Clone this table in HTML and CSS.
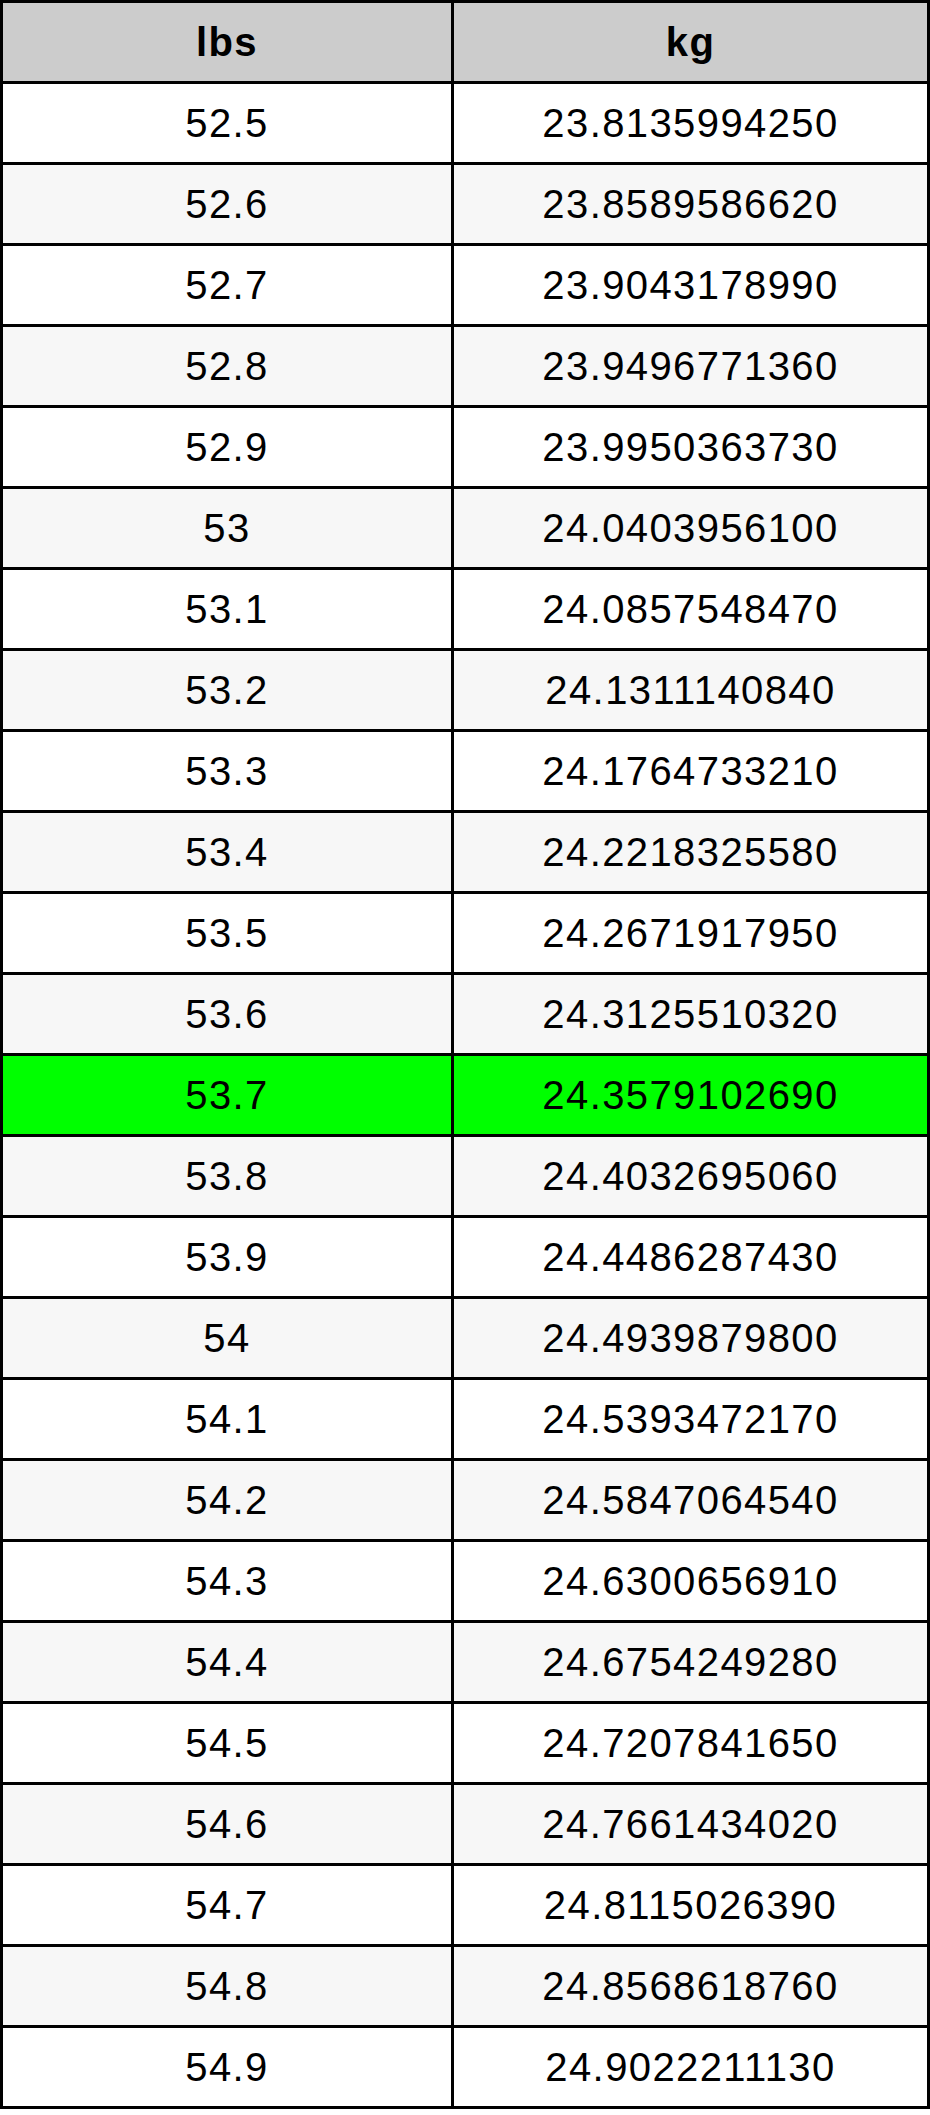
FILE: index.html
```html
<!DOCTYPE html>
<html lang="en">
<head>
<meta charset="utf-8">
<title>lbs to kg</title>
<link rel="stylesheet" href="styles.css">
</head>
<body>
<table class="conv">
<thead>
<tr><th class="c1">lbs</th><th class="c2">kg</th></tr>
</thead>
<tbody>
<tr><td>52.5</td><td>23.8135994250</td></tr>
<tr class="alt"><td>52.6</td><td>23.8589586620</td></tr>
<tr><td>52.7</td><td>23.9043178990</td></tr>
<tr class="alt"><td>52.8</td><td>23.9496771360</td></tr>
<tr><td>52.9</td><td>23.9950363730</td></tr>
<tr class="alt"><td>53</td><td>24.0403956100</td></tr>
<tr><td>53.1</td><td>24.0857548470</td></tr>
<tr class="alt"><td>53.2</td><td>24.1311140840</td></tr>
<tr><td>53.3</td><td>24.1764733210</td></tr>
<tr class="alt"><td>53.4</td><td>24.2218325580</td></tr>
<tr><td>53.5</td><td>24.2671917950</td></tr>
<tr class="alt"><td>53.6</td><td>24.3125510320</td></tr>
<tr class="hl"><td>53.7</td><td>24.3579102690</td></tr>
<tr class="alt"><td>53.8</td><td>24.4032695060</td></tr>
<tr><td>53.9</td><td>24.4486287430</td></tr>
<tr class="alt"><td>54</td><td>24.4939879800</td></tr>
<tr><td>54.1</td><td>24.5393472170</td></tr>
<tr class="alt"><td>54.2</td><td>24.5847064540</td></tr>
<tr><td>54.3</td><td>24.6300656910</td></tr>
<tr class="alt"><td>54.4</td><td>24.6754249280</td></tr>
<tr><td>54.5</td><td>24.7207841650</td></tr>
<tr class="alt"><td>54.6</td><td>24.7661434020</td></tr>
<tr><td>54.7</td><td>24.8115026390</td></tr>
<tr class="alt"><td>54.8</td><td>24.8568618760</td></tr>
<tr><td>54.9</td><td>24.9022211130</td></tr>
</tbody>
</table>
</body>
</html>
```

FILE: styles.css
```css
html, body {
  margin: 0;
  padding: 0;
  background: #ffffff;
}

.conv {
  width: 930px;
  table-layout: fixed;
  border-collapse: separate;
  border-spacing: 0;
  border-top: 3px solid #000;
  border-left: 3px solid #000;
  font-family: "Liberation Sans", Arial, sans-serif;
  font-size: 40px;
  letter-spacing: 1.4px;
  color: #000;
}

.conv th,
.conv td {
  box-sizing: border-box;
  height: 81px;
  padding: 0;
  text-align: center;
  vertical-align: middle;
  border-right: 3px solid #000;
  border-bottom: 3px solid #000;
  background: #ffffff;
}

.conv th {
  background: #cccccc;
  font-weight: bold;
}

.conv .c1 {
  width: 451px;
}

.conv tr.alt td {
  background: #f7f7f7;
}

.conv tr.hl td {
  background: #00ff00;
}
```
